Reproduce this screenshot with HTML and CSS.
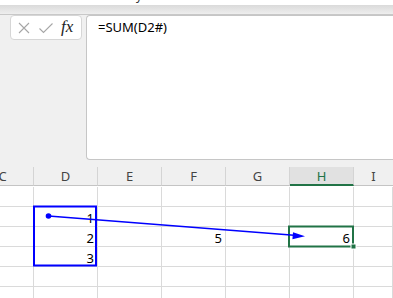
FILE: index.html
```html
<html>
<head>
<title>Formula Bar</title>
<link rel="stylesheet" href="styles.css">
</head>
<body>
<div class="title_strip"><span class="title_text">y</span></div>
<div class="title_band"></div>
<div class="formula_area">
    <div class="fx_box">
        <svg class="fx_icon" width="14" height="14" viewBox="0 0 14 14"><path d="M2 2 L12 12 M12 2 L2 12" stroke="#a6a6a6" stroke-width="1.1" fill="none"/></svg>
        <svg class="fx_icon" width="16" height="14" viewBox="0 0 16 14"><path d="M1.5 7.5 L5.5 11.5 L14.5 2.5" stroke="#a6a6a6" stroke-width="1.1" fill="none"/></svg>
        <span class="fx_label">fx</span>
    </div>
    <div class="formula_box">=SUM(D2#)</div>
</div>
<div class="sheet">
    <div class="col_head part">C</div>
    <div class="col_head">D</div>
    <div class="col_head">E</div>
    <div class="col_head">F</div>
    <div class="col_head">G</div>
    <div class="col_head active">H</div>
    <div class="col_head last">I</div>

    <div class="cell"></div><div class="cell"></div><div class="cell"></div><div class="cell"></div><div class="cell"></div><div class="cell"></div><div class="cell"></div>
    <div class="cell"></div><div class="cell">1</div><div class="cell"></div><div class="cell"></div><div class="cell"></div><div class="cell"></div><div class="cell"></div>
    <div class="cell"></div><div class="cell">2</div><div class="cell"></div><div class="cell">5</div><div class="cell"></div><div class="cell">6</div><div class="cell"></div>
    <div class="cell"></div><div class="cell">3</div><div class="cell"></div><div class="cell"></div><div class="cell"></div><div class="cell"></div><div class="cell"></div>
    <div class="cell"></div><div class="cell"></div><div class="cell"></div><div class="cell"></div><div class="cell"></div><div class="cell"></div><div class="cell"></div>
    <div class="cell"></div><div class="cell"></div><div class="cell"></div><div class="cell"></div><div class="cell"></div><div class="cell"></div><div class="cell"></div>
</div>
<!-- trace arrow and selection overlay, page coordinates -->
<svg class="overlay" width="393" height="298" viewBox="0 0 393 298">
    <rect x="34" y="206.5" width="62" height="59" fill="none" stroke="#0000ff" stroke-width="2"/>
    <rect x="289" y="226.5" width="64" height="20" fill="none" stroke="#217346" stroke-width="2"/>
    <rect x="351" y="244" width="5" height="5" fill="#217346" stroke="#ffffff" stroke-width="1"/>
    <circle cx="48.5" cy="216" r="2.8" fill="#0000ff"/>
    <line x1="48.5" y1="216" x2="294" y2="235.3" stroke="#0000ff" stroke-width="1.6"/>
    <path d="M305 236.2 L293 232.3 L292.4 239.3 Z" fill="#0000ff"/>
</svg>
</body>
</html>
```

FILE: styles.css
```css
body {
    font-family: "Noto Sans", "Open Sans", Arial, sans-serif;
    color: #000000;
    background-color: #F0F0F0;
    margin: 0;
    width: 393px;
    height: 298px;
    overflow: hidden;
    position: relative;
}

.title_strip {
    height: 5px;
    overflow: hidden;
    background-color: #FFFFFF;
}
.title_text {
    display: block;
    margin-top: -11px;
    padding-left: 136px;
    font-size: 12px;
    line-height: 14px;
    color: #333333;
}
.title_band {
    height: 9px;
    background: linear-gradient(#DADADA, #EEEEEE);
    border-bottom: 1px solid #C8C8C8;
}

.formula_area {
    display: flex;
    align-items: flex-start;
    height: 145px;
    padding-left: 10px;
}
.fx_box {
    display: flex;
    align-items: center;
    width: 70px;
    height: 23px;
    background-color: #FFFFFF;
    border: 1px solid #D6D6D6;
    border-radius: 4px;
}
.fx_icon {
    display: block;
    margin-left: 6px;
}
.fx_icon + .fx_icon {
    margin-left: 7px;
}
.fx_label {
    font-family: "Liberation Serif", "DejaVu Serif", serif;
    font-style: italic;
    font-size: 17px;
    margin-left: 7px;
    margin-top: -2px;
    color: #222222;
}
.formula_box {
    flex: 1;
    height: 145px;
    margin-left: 4px;
    background-color: #FFFFFF;
    border: 1px solid #C6C6C6;
    border-right: none;
    border-radius: 4px 0 0 4px;
    font-size: 13px;
    line-height: 17px;
    padding: 3px 0 0 11px;
    box-sizing: border-box;
}

.sheet {
    display: grid;
    grid-template-columns: 34px repeat(5, 64px) 1fr;
    grid-auto-rows: 20px;
    margin-top: 7px;
    background-color: #FFFFFF;
}
.col_head {
    height: 18px;
    background-color: #F0F0F0;
    border-right: 1px solid #D4D4D4;
    border-bottom: 1px solid #C4C4C4;
    text-align: center;
    font-size: 13px;
    line-height: 18px;
    color: #444444;
}
.col_head.part {
    text-indent: -28px;
}
.col_head.last {
    border-right: none;
}
.col_head.active {
    background-color: #E1E1E1;
    border-bottom: 2px solid #217346;
    height: 17px;
    color: #217346;
}
.cell {
    border-right: 1px solid #DADADA;
    border-bottom: 1px solid #DADADA;
    text-align: right;
    padding-right: 3px;
    font-size: 13px;
    line-height: 22px;
}

.overlay {
    position: absolute;
    top: 0;
    left: 0;
}
```
